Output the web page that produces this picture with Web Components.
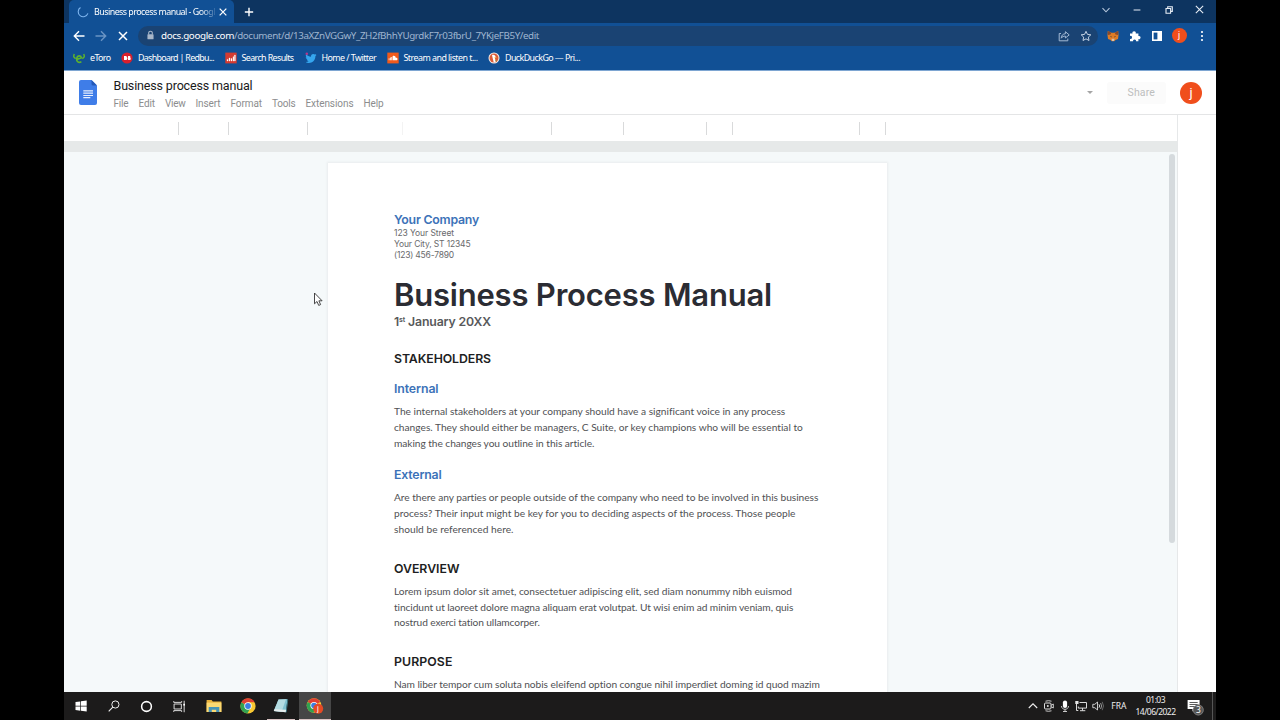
<!DOCTYPE html>
<html lang="en">
<head>
<meta charset="utf-8">
<title>Business process manual</title>
<style>
    body {
        margin: 0;
        background: #000;
        overflow: hidden;
    }
</style>
</head>
<body>
<desktop-screen></desktop-screen>

<script>
/*
 * Icons, keyed by name
 */
const ICONS = {
    spinner: ['0 0 12 12', '<path d="M3.500 1.500A5 5 0 1 0 10.900 7.400" fill="none" stroke="#7db4ee" stroke-width="1.1"/>'],
    close: ['0 0 12 12', '<path d="M2 2l8 8M10 2l-8 8" fill="none" stroke="currentColor" stroke-width="1.5"/>'],
    closeThin: ['0 0 12 12', '<path d="M2 2l8 8M10 2l-8 8" fill="none" stroke="#e7edf5" stroke-width="1.2"/>'],
    plus: ['0 0 12 12', '<path d="M6 1v10M1 6h10" fill="none" stroke="#fff" stroke-width="1.7"/>'],
    back: ['0 0 12 12', '<path d="M11.5 6H1.5M6 1.3L1.3 6 6 10.7" fill="none" stroke="currentColor" stroke-width="1.4"/>'],
    forward: ['0 0 12 12', '<path d="M.5 6h10M6 1.3L10.7 6 6 10.7" fill="none" stroke="currentColor" stroke-width="1.4"/>'],
    lock: ['0 0 10 12', '<path d="M3 5V3.2a2 2 0 0 1 4 0V5" fill="none" stroke="#a9b7c9" stroke-width="1.2"/><rect x="1.6" y="4.6" width="6.8" height="5.6" rx=".7" fill="#a9b7c9"/>'],
    share: ['0 0 12 12', '<path d="M3 3.5H1.2v7.3h8.6V8.6" fill="none" stroke="#a3b9d4"/><path d="M3.2 8.2C3.4 5.2 5 3.8 7.4 3.8V1.7l3.8 3.2-3.8 3.1V6.1C5.5 6 4.2 6.700 3.200 8.200z" fill="none" stroke="#a3b9d4" stroke-linejoin="round"/>'],
    star: ['0 0 12 12', '<path d="M6 1.300l1.450 3.100 3.400.4-2.500 2.300.650 3.400L6 8.850 3 10.500l.650-3.400-2.500-2.300 3.400-.4z" fill="none" stroke="#c2d1e3" stroke-width="1"/>'],
    fox: ['0 0 12 12', '<path d="M.8 1l3.700 1.700h3L11.200 1l.3 4.200-.5 3.700-2.500 1.200-1.200 1.200H4.700L3.500 10.100 1 8.900.5 5.200z" fill="#df7c25"/><path d="M.8 1l3.500 1.700-.8 1.900-2.500.4zM11.200 1L7.700 2.700l.8 1.900 2.500.4z" fill="#8a4a2b"/><path d="M4.500 8.700h3l-.5 2.200H5z" fill="#d8c2ad"/><path d="M3 6.200l1.700.4-.3.900zM9 6.200l-1.700.4.3.9z" fill="#253447"/>'],
    puzzle: ['0 0 12 12', '<path d="M1 3.400h2.500a1.700 1.700 0 1 1 3.200 0h2.700V6.100a1.600 1.600 0 1 1 0 3v2.200H7a1.500 1.500 0 1 0-2.900 0H1V8.700a1.500 1.500 0 1 0 0-2.800z" fill="#fff"/>'],
    panel: ['0 0 12 12', '<path d="M1 1h10v10H1z" fill="#fff"/><path d="M2.600 2.600h3.800v6.800H2.600z" fill="#115095"/>'],
    dots: ['0 0 12 12', '<g fill="#fff"><circle cx="6" cy="2" r="1.100"/><circle cx="6" cy="6" r="1.100"/><circle cx="6" cy="10" r="1.100"/></g>'],
    chevron: ['0 0 12 12', '<path d="M2.500 4.200L6 7.800l3.500-3.600" fill="none" stroke="#b6c7dc" stroke-width="1.100"/>'],
    minimize: ['0 0 12 12', '<path d="M2.600 6h6.800" stroke="#c3cfde" stroke-width="1.200"/>'],
    restore: ['0 0 12 12', '<path d="M3 4.500h4.600v4.700H3zM4.700 4.200V2.700h4.600v4.700H8" fill="none" stroke="#e7edf5" stroke-width="1.100"/>'],
    etoro: ['0 0 12 12', '<path d="M1.300 2C.1 4.500 1 6.300 2.800 6.400M10.700 2c1.200 2.500.3 4.300-1.500 4.400" fill="none" stroke="#5eb32c" stroke-width="1.500"/><path d="M3.800 7.500l4.600-1.700C8 3.200 4.300 3.300 3.700 6.300c-.4 3.500 2 5 4.700 3.300" fill="none" stroke="#5eb32c" stroke-width="1.700"/>'],
    redbubble: ['0 0 12 12', '<circle cx="6" cy="6" r="5.600" fill="#d8202d"/><path d="M3 4h2q1 0 .7 1 1 .500.700 1.500Q6 8 5 8H3zM7 4h1.700q1 .2.600 1.600 1.200 2.400-.6 2.400H7z" fill="#fff"/>'],
    results: ['0 0 12 12', '<path d="M.3.6h11.400v10.800H.3z" fill="#d43b31"/><path d="M2 9V7.400h1V9zM4 9V6h1v3zm2 0V6.500h1V9zm2 0V4.700h.900V9zm1.400 0V3h1v6z" fill="#fff" stroke="#fff" stroke-width=".3"/>'],
    twitter: ['0 0 12 12', '<path d="M11.500 3.100l-1.100 1.200C10.400 8.500 7.200 11 4 11 2.800 11 1.600 10.600.8 10c1.300 0 2.200-.3 3-.9C2.600 9 2 8.400 1.700 7.500h1C1.400 7.100.8 6.300.8 5.100l1 .3C.7 4.500.6 3.300 1.200 2.200 2.500 3.800 4 4.600 6 4.700 5.700 3 6.900 1.900 8.200 1.900c.7 0 1.200.2 1.700.6l1.400-.5-.7 1.200z" fill="#35a6ef"/><circle cx="1.800" cy="1.800" r="1.300" fill="#b5368c"/>'],
    soundcloud: ['0 0 12 12', '<path d="M.3.6h11.400v10.800H.3z" fill="#ef5a1c"/><path d="M5.600 4.200C7.200 3.300 8.500 4.300 8.700 5.700c1.300-.2 1.800.6 1.800 1.200 0 .8-.5 1.300-1.200 1.300H5.600zM4.300 5h.8v3.200h-.8zM3 5.600h.8v2.600H3zM1.700 6.300h.8v1.900h-.8z" fill="#fff"/>'],
    duck: ['0 0 12 12', '<circle cx="6" cy="6" r="5.500" fill="#f4eee9"/><circle cx="6" cy="6" r="4.500" fill="#dc5b37"/><path d="M4 3c2-.8 3.700.3 3.600 2.300L6.900 6c.3 1.400.6 2.700.8 4.100q-1 .4-2 .3C5.400 8.300 4.300 5.300 4 3z" fill="#fff"/><path d="M6.500 5.300h2v.8h-2z" fill="#f4ba32"/><path d="M6.800 8.500l1.600-.3v1.200z" fill="#65b54a"/>'],
    docs: ['0 0 18 25', '<path d="M2 0h10.500L18 5.500V23a2 2 0 0 1-2 2H2a2 2 0 0 1-2-2V2a2 2 0 0 1 2-2z" fill="#3f7de8"/><path d="M12.500 0L18 5.500h-4a1.500 1.500 0 0 1-1.500-1.500z" fill="#2459b8"/><path d="M4.300 10.900h9.700M4.300 13.200h9.700M4.300 15.500h9.700M4.300 17.700h7" stroke="#e8f0fd" stroke-width="1.200"/>'],
    windows: ['0 0 12 12', '<path d="M.5 2.100l4.800-.7v4.300H.5zM6 1.300L11.700.5v5.200H6zM.5 6.400h4.800v4.300l-4.800-.7zM6 6.400h5.700v5.200L6 10.800z" fill="#fff"/>'],
    search: ['0 0 12 12', '<circle cx="7.400" cy="4.500" r="3.600" fill="none" stroke="#f0f0f0"/><path d="M4.800 7.200L.7 11.300" stroke="#f0f0f0" stroke-width="1.100"/>'],
    cortana: ['0 0 12 12', '<circle cx="6" cy="6" r="4.500" fill="none" stroke="#fff" stroke-width="1.400"/>'],
    taskview: ['0 0 12 12', '<path d="M1 3.700h6.700v4.600H1zM.7 1v1.200H8V1M.7 11V9.800H8V11M10.300.7v10.600" fill="none" stroke="#dedede" stroke-width=".9"/><path d="M9.500 3.500h1.600v1.600H9.500z" fill="#fff"/>'],
    folder: ['0 0 16 14', '<path d="M.6 1h5l1.200 1.400h8.600V13H.6z" fill="#e8b23c"/><path d="M.6 3.600h14.800V13H.6z" fill="#fbd973"/><path d="M2.700 13V8h10.600v5h-3.100v-2.300H5.800V13z" fill="#4794b7"/>'],
    chrome: ['0 0 16 16', '<circle cx="8" cy="8" r="7.600" fill="#f8c832"/><path d="M8 8L1.400 4.200A7.600 7.600 0 0 0 7.300 15.600L10.600 9.800z" fill="#31a252"/><path d="M1.400 4.200A7.600 7.600 0 0 1 14.600 4.200H8V8z" fill="#df4033"/><circle cx="8" cy="8" r="3.700" fill="#fff"/><circle cx="8" cy="8" r="2.900" fill="#3c7ee0"/>'],
    chromeUser: ['0 0 18 16', '<circle cx="8" cy="7.500" r="7.300" fill="#f8c832"/><path d="M1.700 3.900A7.300 7.300 0 0 1 14.300 3.900L8 7.500z" fill="#df4033"/><path d="M1.700 3.900A7.300 7.300 0 0 0 7.300 14.800L10.500 9z" fill="#31a252"/><circle cx="8" cy="7.500" r="3.600" fill="#fff"/><circle cx="8" cy="7.500" r="2.800" fill="#3c7ee0"/><circle cx="12.200" cy="10.800" r="5" fill="#e54a25"/><text x="11.100" y="13.200" font-family="Roboto, sans-serif" font-size="7.500" fill="#fff">j</text>'],
    notepad: ['0 0 16 16', '<path d="M5.500 1.500L14.500 1l-1.700 13.200L.8 13z" fill="#7fc0cf"/><path d="M5.500 1.500l7.500-.3L8.600 13.800.8 13z" fill="#b4dce2"/><path d="M.8 13l12 1.200.4-2.500-11.500-.5z" fill="#e7ecec"/><path d="M14.500 1l.7 1-1.600 12.200h-.8z" fill="#3e7d89"/>'],
    up: ['0 0 12 12', '<path d="M1.800 8L6 3.800 10.200 8" fill="none" stroke="#eee" stroke-width="1.100"/>'],
    camera: ['0 0 12 12', '<rect x="1.500" y="3" width="6.500" height="6" rx="1" fill="none" stroke="#ddd"/><path d="M8 5.300L10.300 4v4L8 6.700M2.500 1.200q3-1 6 0M2.500 10.800q3 1 6 0" fill="none" stroke="#ddd" stroke-width=".9"/><circle cx="4.800" cy="6" r="1" fill="#ddd"/>'],
    mic: ['0 0 12 12', '<rect x="3.900" y=".5" width="4.200" height="7.500" rx="2.100" fill="#fff"/><path d="M2.500 6c0 4.400 7 4.400 7 0M6 9.300v2.200M4 11.500h4" fill="none" stroke="#ddd" stroke-width=".9"/>'],
    network: ['0 0 12 12', '<path d="M4.500 2.500h7v5.600H3.300V6.500M7.500 8.100v2.400M5 10.700h5.300M1.500 3v7.500h1.800" fill="none" stroke="#e5e5e5" stroke-width=".95"/><path d="M.3 1h3.200v3H.3z" fill="#e5e5e5"/>'],
    sound: ['0 0 12 12', '<path d="M.8 4.300h2L5.500 2v8L2.800 7.700h-2z" fill="none" stroke="#ddd" stroke-width=".9"/><path d="M7 4.300q1.200 1.700 0 3.400" fill="none" stroke="#ddd"/><path d="M8.600 3q2 3 0 6" fill="none" stroke="#999"/><path d="M10.200 1.800q2.600 4.200 0 8.400" fill="none" stroke="#666"/>'],
    notice: ['0 0 18 17', '<path d="M.6 1h12v9H8L5.500 12.500V10H.6z" fill="#fff"/><path d="M2.500 3.500h8.200M2.500 5.500h8.200M2.500 7.500h5" stroke="#333" stroke-width=".8"/><circle cx="11.300" cy="11" r="5.400" fill="#555"/><circle cx="11.300" cy="11" r="5" fill="none" stroke="#999" stroke-width=".5"/><text x="9" y="14.100" font-family="Noto Sans, sans-serif" font-size="8.400" fill="#fff">3</text>'],
    cursor: ['0 0 10 15', '<path d="M1.500 1v10.800l2.500-2.300 1.700 3.900 1.900-.8-1.700-3.800h3.200z" fill="#fff" stroke="#333" stroke-width=".9"/>']
};

class UiIcon extends HTMLElement {
    connectedCallback() {
        if (this.shadowRoot) return;
        const size = this.getAttribute('size') || '12';
        const [w, h] = size.split('x');
        const [box, body] = ICONS[this.getAttribute('name')];
        this.attachShadow({mode: 'open'}).innerHTML = `
            <style>
                :host { display: block; flex: none; width: ${w}px; height: ${h || w}px; }
                svg { display: block; width: 100%; height: 100%; }
            </style>
            <svg viewBox="${box}">${body}</svg>
        `;
    }
}

/*
 * One line of text, tracked so that it fills the given width
 */
class TextRun extends HTMLElement {
    connectedCallback() {
        if (this.shadowRoot) return;
        const width = parseFloat(this.getAttribute('w'));
        this.attachShadow({mode: 'open'}).innerHTML = `
            <style>
                :host { display: block; flex: none; width: ${width}px; }
                span { display: inline-block; vertical-align: top; white-space: pre; }
            </style>
            <span><slot></slot></span>
        `;
        const span = this.shadowRoot.querySelector('span');
        const count = this.textContent.length;
        const natural = span.getBoundingClientRect().width;
        if (natural) span.style.letterSpacing = ((width - natural) / count).toFixed(4) + 'px';
    }
}

class UserAvatar extends HTMLElement {
    connectedCallback() {
        const size = this.getAttribute('size');
        this.attachShadow({mode: 'open'}).innerHTML = `
            <style>
                :host {
                    display: flex;
                    flex: none;
                    align-items: center;
                    justify-content: center;
                    width: ${size}px;
                    height: ${size}px;
                    border-radius: 50%;
                    background: #f04e1c;
                    color: #fff;
                    font: ${size * 0.6}px/1 Roboto, sans-serif;
                }
            </style>
            <slot></slot>
        `;
    }
}

class BookmarkItem extends HTMLElement {
    connectedCallback() {
        this.attachShadow({mode: 'open'}).innerHTML = `
            <style>
                :host { display: flex; flex: none; align-items: center; gap: 5px; width: ${this.getAttribute('span')}px; }
            </style>
            <ui-icon name="${this.getAttribute('icon')}"></ui-icon>
            <slot></slot>
        `;
    }
}

class BrowserChrome extends HTMLElement {
    connectedCallback() {
        this.attachShadow({mode: 'open'}).innerHTML = `
            <style>
                :host {
                    display: block;
                    height: 71px;
                    box-sizing: border-box;
                    border-bottom: 1px solid #7ea6d2;
                    background: #115095;
                    color: #fff;
                    font: 8.900px/14px "Noto Sans", "Open Sans", sans-serif;
                }
                .row { display: flex; align-items: center; box-sizing: border-box; }
                .tabs { height: 23px; background: #0d3460; padding-left: 5px; }
                .tab {
                    display: flex;
                    align-items: center;
                    align-self: stretch;
                    width: 165px;
                    box-sizing: border-box;
                    padding-left: 8px;
                    background: #115095;
                    border-radius: 5px 5px 0 0;
                }
                .title {
                    width: 122px;
                    margin: 0 2px 0 5px;
                    -webkit-mask-image: linear-gradient(to right, #000 106px, transparent 124px);
                    mask-image: linear-gradient(to right, #000 106px, transparent 124px);
                }
                .tab + ui-icon { margin-left: 10px; }
                .controls { display: flex; gap: 19.500px; margin-left: auto; padding: 0 11px 4px 0; }
                .tools { height: 25px; padding: 0 8px; }
                .nav { display: flex; gap: 10px; padding-left: 1px; }
                .dim { color: #6a94c4; }
                .omnibox {
                    display: flex;
                    flex: none;
                    align-items: center;
                    width: 959.500px;
                    height: 20px;
                    box-sizing: border-box;
                    margin-left: 9px;
                    padding: 0 6px 0 8px;
                    border-radius: 10px;
                    background: #1a4373;
                    color: #9fb5d0;
                    font-size: 9.800px;
                }
                .omnibox ui-icon:first-child { margin-right: 6px; }
                .omnibox text-run.host { color: #fff; }
                .share { margin-left: auto; margin-right: 10px; }
                .ext { display: flex; align-items: center; gap: 10px; margin-left: 9px; }
                .ext user-avatar { margin: 0 -1px; }
                .marks { height: 20px; padding-left: 9px; }
            </style>
            <div class="row tabs">
                <div class="tab">
                    <ui-icon name="spinner"></ui-icon>
                    <div class="title"><text-run w="121">Business process manual - Googl</text-run></div>
                    <ui-icon name="close" size="10"></ui-icon>
                </div>
                <ui-icon name="plus" size="10"></ui-icon>
                <div class="controls">
                    <ui-icon name="chevron"></ui-icon>
                    <ui-icon name="minimize"></ui-icon>
                    <ui-icon name="restore"></ui-icon>
                    <ui-icon name="closeThin" size="11"></ui-icon>
                </div>
            </div>
            <div class="row tools">
                <div class="nav">
                    <ui-icon name="back"></ui-icon>
                    <ui-icon name="forward" class="dim"></ui-icon>
                    <ui-icon name="close"></ui-icon>
                </div>
                <div class="omnibox">
                    <ui-icon name="lock" size="9x11"></ui-icon>
                    <text-run class="host" w="73">docs.google.com</text-run>
                    <text-run w="305">/document/d/13aXZnVGGwY_ZH2fBhhYUgrdkF7r03fbrU_7YKjeFB5Y/edit</text-run>
                    <ui-icon name="share" class="share"></ui-icon>
                    <ui-icon name="star"></ui-icon>
                </div>
                <div class="ext">
                    <ui-icon name="fox"></ui-icon>
                    <ui-icon name="puzzle"></ui-icon>
                    <ui-icon name="panel"></ui-icon>
                    <user-avatar size="15">j</user-avatar>
                    <ui-icon name="dots"></ui-icon>
                </div>
            </div>
            <div class="row marks">
                <bookmark-item icon="etoro" span="48"><text-run w="20.500">eToro</text-run></bookmark-item>
                <bookmark-item icon="redbubble" span="103.500"><text-run w="76">Dashboard | Redbu...</text-run></bookmark-item>
                <bookmark-item icon="results" span="80"><text-run w="52">Search Results</text-run></bookmark-item>
                <bookmark-item icon="twitter" span="82"><text-run w="54.500">Home / Twitter</text-run></bookmark-item>
                <bookmark-item icon="soundcloud" span="101.500"><text-run w="74">Stream and listen t...</text-run></bookmark-item>
                <bookmark-item icon="duck" span="100"><text-run w="75">DuckDuckGo — Pri...</text-run></bookmark-item>
            </div>
        `;
    }
}

class DocsHeader extends HTMLElement {
    connectedCallback() {
        const menus = [['File', 15], ['Edit', 16.5], ['View', 20.5], ['Insert', 25], ['Format', 31.5], ['Tools', 23.5], ['Extensions', 48], ['Help', 20]];
        this.attachShadow({mode: 'open'}).innerHTML = `
            <style>
                :host {
                    display: flex;
                    height: 44px;
                    box-sizing: border-box;
                    padding-left: 15px;
                    background: #fff;
                    border-bottom: 1px solid #e4e5e6;
                }
                .logo { margin-top: 9px; }
                .info { margin: 6px 0 0 16.500px; }
                .name { font: 12.500px/17px Roboto, sans-serif; color: #1a1a1a; }
                nav { display: flex; gap: 10px; margin-top: 3px; font: 10px/14px Roboto, sans-serif; color: #8c8d8e; }
                .right { display: flex; align-items: center; margin-left: auto; padding-right: 14px; }
                .caret { border: 3px solid transparent; border-top: 3px solid #a5a5a5; border-bottom: 0; margin-right: 14px; }
                .share {
                    display: flex;
                    align-items: center;
                    height: 22px;
                    padding: 0 11px 0 21px;
                    margin-right: 14px;
                    border-radius: 3px;
                    background: #fbfbfb;
                    color: #bdbebe;
                    font: 10.500px/14px Roboto, sans-serif;
                }
            </style>
            <ui-icon class="logo" name="docs" size="18x25"></ui-icon>
            <div class="info">
                <text-run class="name" w="139">Business process manual</text-run>
                <nav>${menus.map(([text, w]) => `<text-run w="${w}">${text}</text-run>`).join('')}</nav>
            </div>
            <div class="right">
                <span class="caret"></span>
                <div class="share"><text-run w="27.500">Share</text-run></div>
                <user-avatar size="22">j</user-avatar>
            </div>
        `;
    }
}

class DocsToolbar extends HTMLElement {
    connectedCallback() {
        const groups = [115, 50, 79, 95, 149, 72, 83, 26, 127, 26];
        this.attachShadow({mode: 'open'}).innerHTML = `
            <style>
                :host { display: flex; align-items: center; height: 26px; background: #fff; }
                i { box-sizing: border-box; height: 13px; border-right: 1px solid #d9dadb; }
                i:nth-of-type(4) { border-color: #f3f3f3; }
            </style>
            ${groups.map(w => `<i style="width: ${w}px"></i>`).join('')}
        `;
    }
}

class DocPage extends HTMLElement {
    connectedCallback() {
        this.attachShadow({mode: 'open'}).innerHTML = `
            <style>
                :host {
                    display: block;
                    width: 559px;
                    height: 700px;
                    box-sizing: border-box;
                    padding: 49px 0 0 66px;
                    background: #fff;
                    box-shadow: 0 0 2px 1px #e9ecee;
                    font-family: Lato, sans-serif;
                    color: #505154;
                }
            </style>
            <slot></slot>
        `;
    }
}

class DocSection extends HTMLElement {
    connectedCallback() {
        this.attachShadow({mode: 'open'}).innerHTML = `
            <style>
                :host { display: block; font: 10.200px/15.800px Lato, sans-serif; color: #505154; }
                .head { font: 600 12.300px/16px Inter, sans-serif; color: #3c72b8; margin-bottom: 7px; }
                :host([major]) .head { color: #1d1e22; }
            </style>
            <div class="head"><text-run w="${this.getAttribute('w')}">${this.getAttribute('label')}</text-run></div>
            <slot></slot>
        `;
    }
}

class DocsEditor extends HTMLElement {
    connectedCallback() {
        this.attachShadow({mode: 'open'}).innerHTML = `
            <style>
                :host { display: flex; height: 577px; background: #fff; overflow: hidden; }
                .main { width: 1113px; }
                .ruler { height: 11px; background: #e6e9e9; }
                .canvas { display: flex; height: 540px; background: #f5f9fa; padding-left: 264px; box-sizing: border-box; }
                doc-page { margin-top: 11px; flex: none; }
                .scroll { width: 6px; height: 389px; margin: 2px 2px 0 auto; border-radius: 3px; background: #d5dadd; }
                .side { flex: 1; border-left: 1px solid #e6e8e9; }
                .brand, .date { font: 600 12.300px/16px Inter, sans-serif; color: #3c72b8; }
                .address { font: 8.500px/11px Inter, sans-serif; margin-top: -.5px; color: #68696c; }
                .title { font: 600 31px/40px Inter, sans-serif; color: #2b2c33; margin-top: 14.500px; }
                .date { color: #58595b; margin-top: -1px; }
                sup { font-size: 7px; line-height: 0; vertical-align: 4px; }
                .s1 { margin-top: 21px; }
                .s2 { margin-top: 16px; }
                .s3 { margin-top: 23px; }
                .s1 + .s2 { margin-top: 14px; }
            </style>
            <div class="main">
                <docs-toolbar></docs-toolbar>
                <div class="ruler"></div>
                <div class="canvas">
                    <doc-page>
                        <text-run class="brand" w="85">Your Company</text-run>
                        <div class="address">
                            <text-run w="60">123 Your Street</text-run>
                            <text-run w="76.500">Your City, ST 12345</text-run>
                            <text-run w="60">(123) 456-7890</text-run>
                        </div>
                        <text-run class="title" w="378">Business Process Manual</text-run>
                        <text-run class="date" w="97">1<sup>st</sup> January 20XX</text-run>
                        <doc-section class="s1" major label="STAKEHOLDERS" w="97"></doc-section>
                        <doc-section class="s2" label="Internal" w="44.500">
                            <text-run w="391">The internal stakeholders at your company should have a significant voice in any process</text-run>
                            <text-run w="409">changes. They should either be managers, C Suite, or key champions who will be essential to</text-run>
                            <text-run w="200.500">making the changes you outline in this article.</text-run>
                        </doc-section>
                        <doc-section class="s2" label="External" w="47.500">
                            <text-run w="424.500">Are there any parties or people outside of the company who need to be involved in this business</text-run>
                            <text-run w="401.500">process? Their input might be key for you to deciding aspects of the process. Those people</text-run>
                            <text-run w="119.500">should be referenced here.</text-run>
                        </doc-section>
                        <doc-section class="s3" major label="OVERVIEW" w="65.500">
                            <text-run w="398">Lorem ipsum dolor sit amet, consectetuer adipiscing elit, sed diam nonummy nibh euismod</text-run>
                            <text-run w="399.500">tincidunt ut laoreet dolore magna aliquam erat volutpat. Ut wisi enim ad minim veniam, quis</text-run>
                            <text-run w="146">nostrud exerci tation ullamcorper.</text-run>
                        </doc-section>
                        <doc-section class="s3" major label="PURPOSE" w="58.500">
                            <text-run w="426">Nam liber tempor cum soluta nobis eleifend option congue nihil imperdiet doming id quod mazim</text-run>
                        </doc-section>
                    </doc-page>
                    <div class="scroll"></div>
                </div>
            </div>
            <div class="side"></div>
        `;
    }
}

class TaskBar extends HTMLElement {
    connectedCallback() {
        const apps = [['windows', 12], ['search', 12], ['cortana', 13], ['taskview', 13], ['folder', '16x14'], ['chrome', 16], ['notepad', 16, 'open'], ['chromeUser', '18x16', 'open active']];
        const tray = ['up', 'camera', 'mic', 'network', 'sound'];
        this.attachShadow({mode: 'open'}).innerHTML = `
            <style>
                :host {
                    display: flex;
                    height: 28px;
                    background: #1c1b1b;
                    color: #eee;
                    font: 8.500px/12px "Noto Sans", "Open Sans", sans-serif;
                }
                .apps { display: flex; }
                .app {
                    display: flex;
                    align-items: center;
                    justify-content: center;
                    width: 33px;
                    box-sizing: border-box;
                    padding-top: 1px;
                    border-bottom: 1px solid transparent;
                }
                .app:nth-child(5) { margin-left: 1px; }
                .app:nth-child(n+6) { width: 35px; }
                .app.open:nth-child(n) { border-bottom-color: #d9c3c3; width: 28px; margin: 0 3px 0 2px; }
                .app.active:nth-child(n) { background: #464646; width: 32px; margin: 0 1px; }
                .tray { display: flex; align-items: center; gap: 4.200px; margin-left: auto; }
                .lang { margin-left: 3.500px; }
                .clock { display: flex; flex-direction: column; align-items: center; margin: 0 11.500px 0 5px; }
                .edge { border-left: 1px solid #555; height: 28px; width: 3px; margin-left: 7px; }
            </style>
            <div class="apps">
                ${apps.map(([name, size, cls]) => `<div class="app ${cls || ''}"><ui-icon name="${name}" size="${size}"></ui-icon></div>`).join('')}
            </div>
            <div class="tray">
                ${tray.map(name => `<ui-icon name="${name}"></ui-icon>`).join('')}
                <text-run class="lang" w="15">FRA</text-run>
                <div class="clock"><text-run w="19">01:03</text-run><text-run w="40">14/06/2022</text-run></div>
            </div>
            <ui-icon name="notice" size="18x17" style="margin-top: 7px"></ui-icon>
            <div class="edge"></div>
        `;
    }
}

class DesktopScreen extends HTMLElement {
    connectedCallback() {
        this.attachShadow({mode: 'open'}).innerHTML = `
            <style>
                :host { display: block; width: 1152px; height: 720px; margin: 0 auto; overflow: hidden; }
                .pointer { position: absolute; left: 313px; top: 292px; }
            </style>
            <browser-chrome></browser-chrome>
            <docs-header></docs-header>
            <docs-editor></docs-editor>
            <task-bar></task-bar>
            <ui-icon class="pointer" name="cursor" size="10x15"></ui-icon>
        `;
    }
}

customElements.define('ui-icon', UiIcon);
customElements.define('text-run', TextRun);
customElements.define('user-avatar', UserAvatar);
customElements.define('bookmark-item', BookmarkItem);
customElements.define('browser-chrome', BrowserChrome);
customElements.define('docs-header', DocsHeader);
customElements.define('docs-toolbar', DocsToolbar);
customElements.define('doc-page', DocPage);
customElements.define('doc-section', DocSection);
customElements.define('docs-editor', DocsEditor);
customElements.define('task-bar', TaskBar);
customElements.define('desktop-screen', DesktopScreen);
</script>
</body>
</html>
